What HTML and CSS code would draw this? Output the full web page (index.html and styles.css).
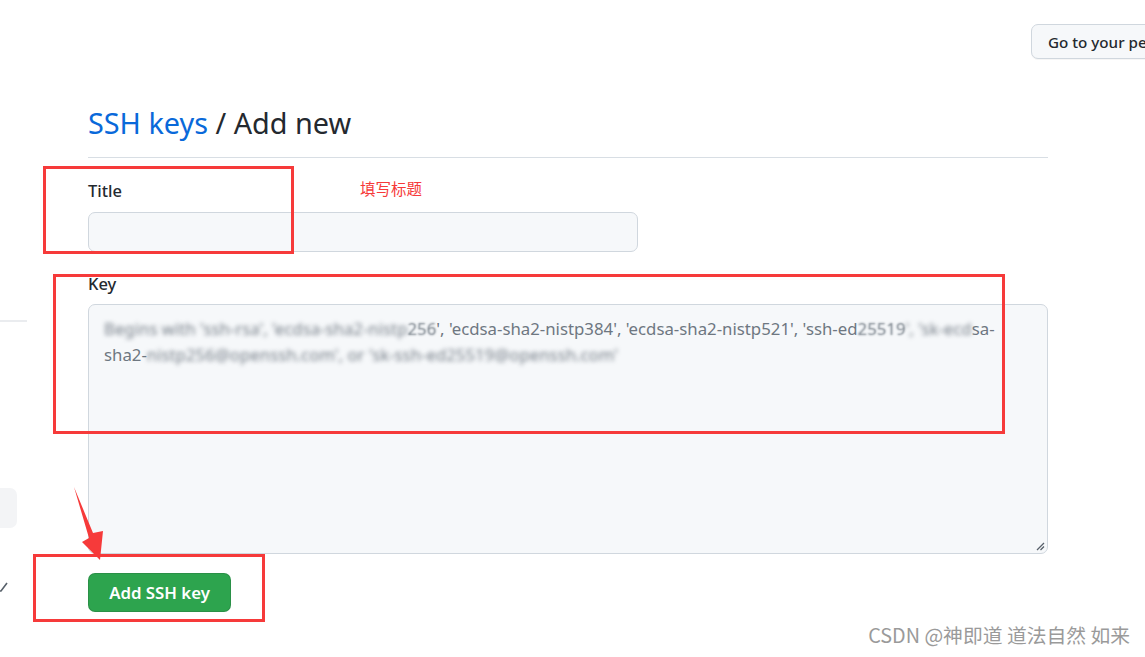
FILE: index.html
```html
<!DOCTYPE html>
<html lang="en">
<head>
<meta charset="utf-8">
<title>SSH keys / Add new</title>
<link rel="stylesheet" href="styles.css">
</head>
<body>
<div class="page">
  <header class="topbar">
    <button class="btn-profile" type="button">Go to your personal profile</button>
  </header>
  <div class="layout">
    <aside class="sidebar">
      <div class="side-line"></div>
      <div class="side-box"></div>
      <div class="side-check">
        <svg width="8" height="14" viewBox="0 0 8 14"><path d="M-4 13 L1 13 L7 5" fill="none" stroke="#57606a" stroke-width="1.6"/></svg>
      </div>
    </aside>
    <main class="main">
      <div class="subhead">
        <h2 class="subhead-heading"><a class="link" href="#">SSH keys</a> / Add new</h2>
      </div>
      <form class="form">
        <label class="label" for="title">Title</label>
        <div class="input"></div>
        <label class="label label-key">Key</label>
        <div class="textarea">
          <div class="placeholder"><span class="blur">Begins with 'ssh-rsa', 'ecdsa-sha2-nistp</span><span class="blur-light">256</span><span>', 'ecdsa-sha2-nistp384', 'ecdsa-sha2-nistp521', 'ssh-ed</span><span class="blur-light">25519</span><span class="blur">', 'sk-ecd</span><span>sa-</span><span>sha2-</span><span class="blur">nistp256@openssh.com', or 'sk-ssh-ed25519@openssh.com'</span></div>
          <svg class="resize" width="10" height="10" viewBox="0 0 10 10"><path d="M2 9 L9 2 M5.5 9 L9 5.5" stroke="#57606a" stroke-width="1.3"/></svg>
        </div>
        <button class="btn-primary" type="button">Add SSH key</button>
      </form>
    </main>
  </div>

  <div class="mark mark-title"></div>
  <div class="mark mark-key"></div>
  <div class="mark mark-btn"></div>
  <div class="note">填写标题</div>
  <svg class="arrow" width="1145" height="657" viewBox="0 0 1145 657"><polygon points="74,487 93,533 103,531 100,560 82,542 89,538" fill="#f63a3a"/></svg>
  <div class="watermark">CSDN @神即道 道法自然 如来</div>
</div>
</body>
</html>
```
FILE: styles.css
```css
html, body {
  margin: 0;
  padding: 0;
  background: #ffffff;
}
body {
  font-family: "Noto Sans", "Open Sans", "Noto Sans CJK SC", sans-serif;
  color: #24292f;
  overflow: hidden;
  width: 1145px;
  height: 657px;
}
.page {
  position: relative;
  width: 1145px;
  height: 657px;
  overflow: hidden;
}
.topbar {
  padding-top: 24px;
  padding-left: 1031px;
  height: 35px;
  white-space: nowrap;
}
.btn-profile {
  height: 35px;
  box-sizing: border-box;
  padding: 0 16px;
  border: 1px solid #d0d7de;
  border-radius: 7px;
  background: #f6f8fa;
  color: #24292f;
  font-family: inherit;
  font-size: 15.2px;
  font-weight: 500;
  white-space: nowrap;
  box-shadow: 0 1px 0 rgba(27,31,36,0.04);
}
.layout {
  display: flex;
  align-items: flex-start;
}
.sidebar {
  width: 27px;
  flex: none;
  overflow: hidden;
}
.side-line {
  margin-top: 261px;
  height: 2px;
  background: #eaecef;
}
.side-box {
  margin-top: 166px;
  margin-left: -10px;
  width: 27px;
  height: 40px;
  border-radius: 7px;
  background: #f3f4f6;
}
.side-check {
  margin-top: 50px;
  height: 14px;
}
.side-check svg { display: block; }
.main {
  margin-left: 61px;
  width: 960px;
  flex: none;
}
.subhead {
  margin-top: 44px;
  padding-bottom: 14px;
  border-bottom: 1px solid #d8dee4;
}
.subhead-heading {
  margin: 0;
  font-size: 28.8px;
  line-height: 40px;
  font-weight: 400;
  color: #24292f;
}
.link {
  color: #0969da;
  text-decoration: none;
}
.form {
  display: flex;
  flex-direction: column;
  align-items: flex-start;
}
.label {
  display: block;
  margin-top: 21px;
  margin-bottom: 9px;
  font-size: 16.5px;
  line-height: 24px;
  font-weight: 500;
  color: #24292f;
}
.label-key {
  margin-top: 20px;
  margin-bottom: 8px;
}
.input {
  width: 550px;
  height: 40px;
  box-sizing: border-box;
  border: 1px solid #d0d7de;
  border-radius: 7px;
  background: #f6f8fa;
}
.textarea {
  position: relative;
  width: 960px;
  height: 250px;
  box-sizing: border-box;
  border: 1px solid #d0d7de;
  border-radius: 7px;
  background: #f6f8fa;
  padding: 11px 15px;
}
.placeholder {
  font-size: 16.8px;
  line-height: 26px;
  color: #6e7781;
}
.blur {
  color: transparent;
  text-shadow: 0 0 4px rgba(110, 119, 129, 0.9);
}
.blur-light {
  color: transparent;
  text-shadow: 0 0 2px rgba(110, 119, 129, 0.95);
}
.resize {
  position: absolute;
  right: 2px;
  bottom: 2px;
}
.btn-primary {
  margin-top: 19px;
  width: 143px;
  height: 39px;
  border: 1px solid rgba(27,31,36,0.15);
  border-radius: 7px;
  background: #2da44e;
  color: #ffffff;
  font-family: inherit;
  font-size: 16.8px;
  font-weight: 600;
  padding: 0;
}
.mark {
  position: absolute;
  border: 3px solid #f63a3a;
  box-sizing: border-box;
}
.mark-title { left: 43px; top: 166px; width: 251px; height: 88px; }
.mark-key { left: 53px; top: 274px; width: 952px; height: 160px; }
.mark-btn { left: 33px; top: 554px; width: 232px; height: 68px; }
.note {
  position: absolute;
  left: 360px;
  top: 178px;
  font-family: "Noto Sans CJK SC", sans-serif;
  font-size: 15.5px;
  line-height: 20px;
  color: #f63a3a;
}
.arrow {
  position: absolute;
  left: 0;
  top: 0;
  pointer-events: none;
}
.watermark {
  position: absolute;
  right: 15px;
  top: 622px;
  font-family: "Noto Sans CJK SC", sans-serif;
  font-size: 19.8px;
  line-height: 26px;
  color: #9a9a9a;
  text-shadow: 0 0 1px #ffffff;
}
```
